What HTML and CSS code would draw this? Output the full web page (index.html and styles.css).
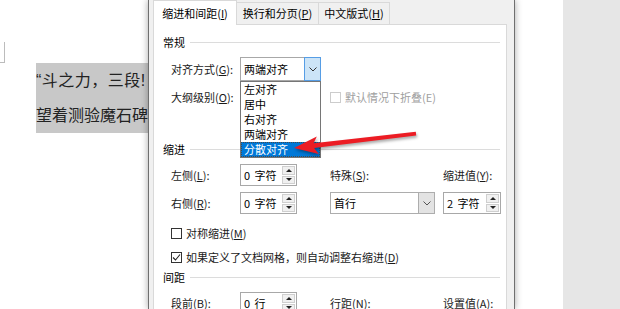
FILE: index.html
```html
<!DOCTYPE html>
<html lang="zh-CN">
<head>
    <meta charset="UTF-8">
    <meta name="viewport" content="width=device-width, initial-scale=1.0">
    <title>段落</title>
    <link rel="stylesheet" href="styles.css">
</head>
<body>
<div class="screen">
    <div class="doc-left">
        <div class="crop-mark"></div>
        <div class="selection">
            <p>“斗之力，三段!</p>
            <p>望着测验魔石碑</p>
        </div>
    </div>

    <div class="dialog">
        <div class="tabs">
            <div class="tab active">缩进和间距(<u>I</u>)</div>
            <div class="tab">换行和分页(<u>P</u>)</div>
            <div class="tab">中文版式(<u>H</u>)</div>
        </div>

        <div class="panel">
            <div class="group-title">常规</div>

            <div class="row row-combo">
                <label class="label">对齐方式(<u>G</u>):</label>
                <div class="combo open">
                    <span class="combo-value">两端对齐</span>
                    <span class="combo-btn">
                        <svg width="8" height="5" viewBox="0 0 8 5"><polyline points="0.5,0.5 4,4 7.5,0.5" fill="none" stroke="#333" stroke-width="1"/></svg>
                    </span>
                    <ul class="dropdown">
                        <li>左对齐</li>
                        <li>居中</li>
                        <li>右对齐</li>
                        <li>两端对齐</li>
                        <li class="hover">分散对齐</li>
                    </ul>
                </div>
            </div>

            <div class="row row-combo">
                <label class="label">大纲级别(<u>O</u>):</label>
                <div class="combo"></div>
                <div class="check disabled span-2">
                    <span class="box"></span><span>默认情况下折叠(E)</span>
                </div>
            </div>

            <div class="group-title gap-big">缩进</div>

            <div class="row">
                <label class="label">左侧(<u>L</u>):</label>
                <div class="spin">
                    <span class="spin-value">0 字符</span>
                    <span class="spin-btns"><span class="up"></span><span class="down"></span></span>
                </div>
                <label class="label">特殊(<u>S</u>):</label>
                <label class="label">缩进值(<u>Y</u>):</label>
            </div>

            <div class="row">
                <label class="label">右侧(<u>R</u>):</label>
                <div class="spin">
                    <span class="spin-value">0 字符</span>
                    <span class="spin-btns"><span class="up"></span><span class="down"></span></span>
                </div>
                <div class="select">
                    <span class="combo-value">首行</span>
                    <span class="select-btn">
                        <svg width="8" height="5" viewBox="0 0 8 5"><polyline points="0.5,0.5 4,4 7.5,0.5" fill="none" stroke="#555" stroke-width="1"/></svg>
                    </span>
                </div>
                <div class="spin spin-wide">
                    <span class="spin-value">2 字符</span>
                    <span class="spin-btns"><span class="up"></span><span class="down"></span></span>
                </div>
            </div>

            <div class="check check-first">
                <span class="box"></span><span>对称缩进(<u>M</u>)</span>
            </div>
            <div class="check">
                <span class="box">
                    <svg width="9" height="9" viewBox="0 0 9 9"><polyline points="1,4.5 3.5,7 8,1.5" fill="none" stroke="#222" stroke-width="1.1"/></svg>
                </span><span>如果定义了文档网格，则自动调整右缩进(<u>D</u>)</span>
            </div>

            <div class="group-title gap-small">间距</div>

            <div class="row">
                <label class="label">段前(<u>B</u>):</label>
                <div class="spin">
                    <span class="spin-value">0 行</span>
                    <span class="spin-btns"><span class="up"></span><span class="down"></span></span>
                </div>
                <label class="label">行距(<u>N</u>):</label>
                <label class="label">设置值(<u>A</u>):</label>
            </div>
        </div>
    </div>

    <div class="doc-right"></div>
    <div class="backdrop"></div>

    <svg class="arrow" width="620" height="309" viewBox="0 0 620 309">
        <polygon points="294,148 316.8,136.4 313.6,143.2 415.8,131.8 416.2,135.4 314.1,148 318.8,154" fill="#ec1c24"/>
    </svg>
</div>
</body>
</html>
```

FILE: styles.css
```css
* {
    margin: 0;
    padding: 0;
    box-sizing: border-box;
}

body {
    width: 620px;
    height: 309px;
    overflow: hidden;
    font-family: "Noto Sans CJK SC", sans-serif;
    font-size: 11px;
    color: #000;
    background-color: #e6e6e6;
}

u {
    text-decoration: underline;
    text-underline-offset: 1px;
}

.screen {
    display: flex;
    height: 309px;
    position: relative;
}

/* document behind the dialog */

.doc-left {
    width: 148px;
    flex-shrink: 0;
    background-color: #ffffff;
    overflow: hidden;
}

.crop-mark {
    width: 5px;
    height: 21px;
    margin-top: 42px;
    border-right: 1px solid #bcbcbc;
    border-bottom: 1px solid #bcbcbc;
}

.selection {
    margin-left: 36px;
    width: 112px;
    overflow: hidden;
    background-color: #c8c8c8;
    white-space: nowrap;
    font-family: "Liberation Sans", "Noto Sans CJK SC", sans-serif;
    font-size: 16px;
    line-height: 35px;
    color: #222;
}

.selection p:first-child {
    letter-spacing: 0.5px;
}

.doc-right {
    width: 48px;
    flex-shrink: 0;
    background-color: #ffffff;
}

.backdrop {
    flex: 1;
    background-color: #e6e6e6;
}

/* dialog */

.dialog {
    width: 367px;
    flex-shrink: 0;
    background-color: #f0f0f0;
    border-left: 1px solid #6f6f6f;
    border-right: 1px solid #6f6f6f;
    box-shadow: 0 0 7px rgba(0, 0, 0, 0.35);
    padding: 0 7px 0 4px;
    position: relative;
    z-index: 1;
    display: flex;
    flex-direction: column;
}

.tabs {
    display: flex;
    align-items: flex-end;
    height: 24px;
}

.tab {
    height: 22px;
    line-height: 21px;
    text-align: center;
    background-color: #f0f0f0;
    border: 1px solid #d9d9d9;
    border-bottom: none;
    margin-left: -1px;
    white-space: nowrap;
}

.tab:nth-child(1) {
    width: 84px;
    margin-left: 0;
}

.tab:nth-child(2) {
    width: 83px;
}

.tab:nth-child(3) {
    width: 72px;
}

.tab.active {
    height: 25px;
    line-height: 25px;
    background-color: #ffffff;
    margin-bottom: -1px;
    position: relative;
    z-index: 1;
}

.panel {
    flex: 1;
    background-color: #ffffff;
    border: 1px solid #d9d9d9;
    padding: 8px 6px 0 9px;
}

.group-title {
    display: flex;
    align-items: center;
    gap: 5px;
    height: 18px;
}

.group-title::after {
    content: '';
    flex: 1;
    height: 1px;
    background-color: #dcdcdc;
}

.gap-big {
    margin-top: 31px;
}

.gap-small {
    margin-top: 2px;
}

.row {
    display: grid;
    grid-template-columns: 69px 90px 113px 58px;
    align-items: center;
    height: 22px;
    margin-top: 6px;
    margin-left: 8px;
}

.row-combo {
    height: 24px;
}

.row-combo + .row-combo {
    margin-top: 4px;
}

.label {
    white-space: nowrap;
    color: #1a1a1a;
}

.span-2 {
    grid-column: span 2;
}

/* combo boxes */

.combo {
    position: relative;
    width: 81px;
    height: 24px;
    display: flex;
    background-color: #ffffff;
    border: 1px solid #a8a8a8;
}

.combo-value {
    flex: 1;
    padding-left: 3px;
    line-height: 22px;
    white-space: nowrap;
}

.combo-btn {
    width: 17px;
    display: flex;
    align-items: center;
    justify-content: center;
    background-color: #cce4f7;
    border: 1px solid #569de5;
    margin: -1px -1px -1px 0;
}

.dropdown {
    position: absolute;
    top: 23px;
    left: -1px;
    width: 81px;
    list-style: none;
    background-color: #ffffff;
    border: 1px solid #767676;
    z-index: 2;
}

.dropdown li {
    height: 15px;
    line-height: 15px;
    padding-left: 3px;
    white-space: nowrap;
}

.dropdown li.hover {
    background-color: #0078d7;
    color: #ffffff;
    outline: 1px dotted #4a4a4a;
    outline-offset: -1px;
}

.select {
    width: 105px;
    height: 22px;
    display: flex;
    background-color: #ffffff;
    border: 1px solid #adadad;
}

.select .combo-value {
    line-height: 20px;
}

.select-btn {
    width: 16px;
    display: flex;
    align-items: center;
    justify-content: center;
    background-color: #e3e3e3;
    border-left: 1px solid #adadad;
}

/* spin boxes */

.spin {
    width: 57px;
    height: 22px;
    display: flex;
    background-color: #ffffff;
    border: 1px solid #a8a8a8;
}

.spin-wide {
    width: 58px;
}

.spin-value {
    flex: 1;
    padding-left: 3px;
    line-height: 20px;
    white-space: nowrap;
    word-spacing: 2px;
}

.spin-btns {
    width: 14px;
    display: flex;
    flex-direction: column;
    gap: 1px;
    padding: 1px 1px 1px 0;
}

.spin-btns span {
    flex: 1;
    display: flex;
    align-items: center;
    justify-content: center;
    background-color: #f0f0f0;
    border: 1px solid #cfcfcf;
}

.spin-btns .up::before {
    content: '';
    border-left: 3px solid transparent;
    border-right: 3px solid transparent;
    border-bottom: 3px solid #222;
}

.spin-btns .down::before {
    content: '';
    border-left: 3px solid transparent;
    border-right: 3px solid transparent;
    border-top: 3px solid #222;
}

/* check boxes */

.check {
    display: flex;
    align-items: center;
    gap: 4px;
    height: 18px;
    margin-top: 6px;
    margin-left: 8px;
    white-space: nowrap;
    color: #1a1a1a;
}

.check-first {
    margin-top: 10px;
}

.row .check {
    margin: 0;
}

.box {
    width: 11px;
    height: 11px;
    display: flex;
    align-items: center;
    justify-content: center;
    background-color: #ffffff;
    border: 1px solid #333333;
}

.check.disabled {
    color: #a0a0a0;
}

.check.disabled .box {
    border-color: #cccccc;
}

/* annotation */

.arrow {
    position: absolute;
    left: 0;
    top: 0;
    pointer-events: none;
    z-index: 5;
    filter: drop-shadow(1px 2px 1.5px rgba(0, 0, 0, 0.35));
}
```
